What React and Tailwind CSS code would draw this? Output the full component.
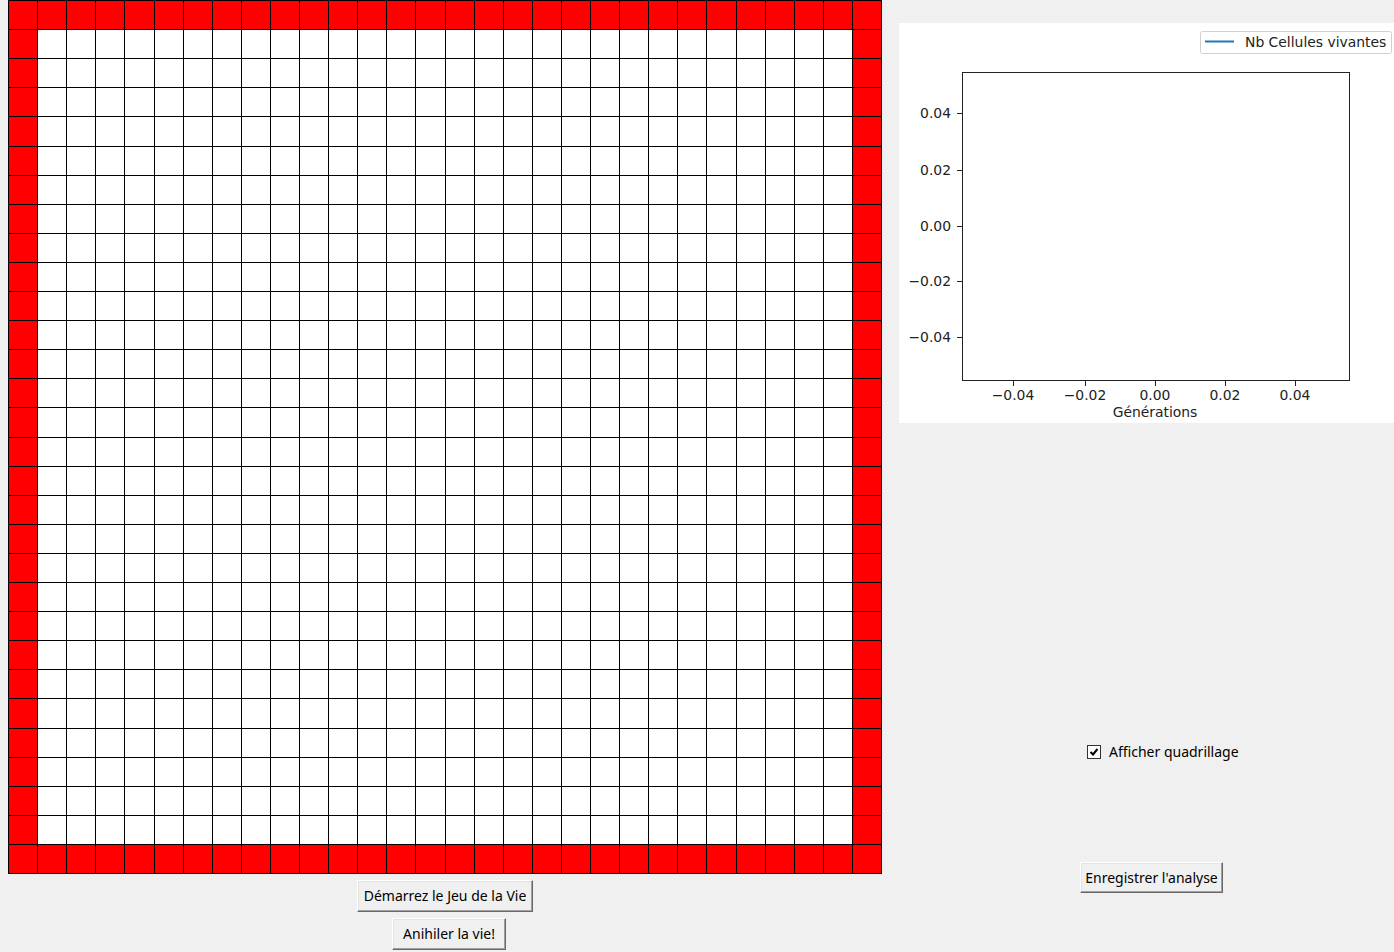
import React, { useState } from 'react';

const N = 30;

const TkButton = ({ children, className = '' }) => (
  <button
    className={`bg-[#f0f0f0] border border-t-white border-l-white border-r-[#696969] border-b-[#696969] shadow-[inset_-1px_-1px_0_#a0a0a0,inset_1px_1px_0_#e3e3e3] text-[14px] text-black leading-none font-['Noto_Sans',sans-serif] ${className}`}
  >
    {children}
  </button>
);

const LifeGrid = ({ showGrid }) => {
  const cells = [];
  for (let r = 0; r < N; r++) {
    for (let c = 0; c < N; c++) {
      const edge = r === 0 || c === 0 || r === N - 1 || c === N - 1;
      cells.push(
        <div
          key={`${r}-${c}`}
          className={`${edge ? 'bg-[#ff0000]' : 'bg-white'} ${showGrid ? 'border-r border-b border-black' : ''}`}
        />
      );
    }
  }
  return (
    <div className="grid grid-cols-[repeat(30,1fr)] grid-rows-[repeat(30,1fr)] w-[874px] h-[874px] border-l border-t border-black">
      {cells}
    </div>
  );
};

const Chart = () => {
  const yTicks = [
    { y: 90, label: '0.04' },
    { y: 147, label: '0.02' },
    { y: 203, label: '0.00' },
    { y: 258, label: '\u22120.02' },
    { y: 314, label: '\u22120.04' },
  ];
  const xTicks = [
    { x: 114, label: '\u22120.04' },
    { x: 186, label: '\u22120.02' },
    { x: 256, label: '0.00' },
    { x: 326, label: '0.02' },
    { x: 396, label: '0.04' },
  ];
  return (
    <div className="w-[495px] h-[400px] bg-white">
      <svg width="495" height="400" className="block font-['DejaVu_Sans',sans-serif]">
        {/* axes box */}
        <rect x="63.5" y="49.5" width="387" height="308" fill="none" stroke="#222" strokeWidth="1" />
        {yTicks.map(t => (
          <g key={t.label}>
            <line x1="58" y1={t.y + 0.5} x2="63" y2={t.y + 0.5} stroke="#222" />
            <text x="52" y={t.y + 5} textAnchor="end" fontSize="13.9" fill="#222">{t.label}</text>
          </g>
        ))}
        {xTicks.map(t => (
          <g key={t.label}>
            <line x1={t.x + 0.5} y1="358" x2={t.x + 0.5} y2="363" stroke="#222" />
            <text x={t.x} y="377" textAnchor="middle" fontSize="13.9" fill="#222">{t.label}</text>
          </g>
        ))}
        <text x="256" y="394" textAnchor="middle" fontSize="13.9" fill="#222">Générations</text>
        {/* legend */}
        <rect x="301.5" y="8.5" width="191" height="22" rx="2" fill="white" stroke="#d0d0d0" />
        <line x1="306" y1="18.5" x2="335" y2="18.5" stroke="#1f77b4" strokeWidth="2" />
        <text x="346" y="23.5" fontSize="13.9" fill="#222">Nb Cellules vivantes</text>
      </svg>
    </div>
  );
};

export default function App() {
  const [showGrid, setShowGrid] = useState(true);

  return (
    <div className="w-[1394px] h-[952px] bg-[#f0f0f0] flex overflow-hidden font-['Noto_Sans',sans-serif]">
      {/* Left: board + controls */}
      <div className="w-[882px] pl-2 flex flex-col">
        <LifeGrid showGrid={showGrid} />
        <div className="flex flex-col items-center gap-[6px] mt-[6px]">
          <TkButton className="w-[176px] h-[32px]">Démarrez le Jeu de la Vie</TkButton>
          <TkButton className="w-[114px] h-[32px] ml-[8px]">Anihiler la vie!</TkButton>
        </div>
      </div>

      {/* Right: analysis */}
      <div className="ml-[17px] pt-[23px] flex flex-col">
        <Chart />
        <label
          className="mt-[322px] ml-[188px] flex items-center gap-[8px] text-[14px] text-black leading-none cursor-pointer"
          onClick={() => setShowGrid(!showGrid)}
        >
          <span className="w-[14px] h-[14px] bg-white border border-[#333] flex items-center justify-center">
            {showGrid && (
              <svg width="10" height="10" viewBox="0 0 10 10">
                <path d="M1.5 5 L4 7.5 L8.5 2" fill="none" stroke="#000" strokeWidth="2" />
              </svg>
            )}
          </span>
          <span>Afficher quadrillage</span>
        </label>
        <TkButton className="mt-[103px] ml-[181px] w-[143px] h-[31px]">Enregistrer l'analyse</TkButton>
      </div>
    </div>
  );
}
